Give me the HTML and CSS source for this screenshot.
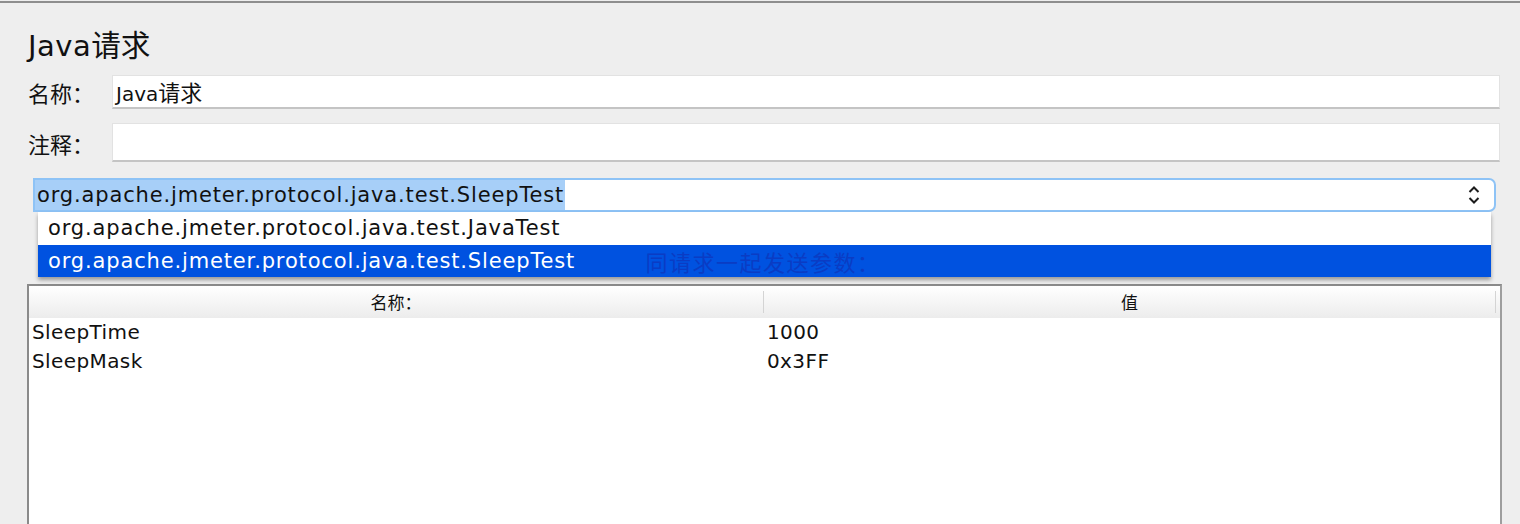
FILE: index.html
```html
<!DOCTYPE html>
<html lang="zh">
  <head>
    <meta charset="UTF-8" />
    <meta name="viewport" content="width=device-width, initial-scale=1.0" />
    <title>Java请求</title>
    <link rel="stylesheet" href="styles.css">
  </head>
  <body>
    <div class="panel">
      <h1 class="panel-title">Java<span class="cjk">请求</span></h1>

      <div class="field-row">
        <label class="field-label">名称：</label>
        <div class="text-field">Java<span class="cjk">请求</span></div>
      </div>
      <div class="field-row field-row-tall">
        <label class="field-label">注释：</label>
        <div class="text-field"></div>
      </div>

      <div class="combo-wrap">
        <div class="combo">
          <span class="combo-value">org.apache.jmeter.protocol.java.test.SleepTest</span>
          <svg class="combo-arrows" width="16" height="22" viewBox="0 0 16 22">
            <polyline points="3.5,8 8,3.5 12.5,8" />
            <polyline points="3.5,14 8,18.5 12.5,14" />
          </svg>
        </div>
        <ul class="combo-popup">
          <li class="combo-item">org.apache.jmeter.protocol.java.test.JavaTest</li>
          <li class="combo-item selected">org.apache.jmeter.protocol.java.test.SleepTest</li>
        </ul>
      </div>

      <div class="params-title">同请求一起发送参数：</div>

      <div class="params-table">
        <div class="table-head">
          <div class="head-cell">名称：</div>
          <div class="head-cell">值</div>
        </div>
        <div class="table-row">
          <div class="cell">SleepTime</div>
          <div class="cell">1000</div>
        </div>
        <div class="table-row">
          <div class="cell">SleepMask</div>
          <div class="cell">0x3FF</div>
        </div>
      </div>
    </div>
  </body>
</html>
```

FILE: styles.css
```css
body {
  margin: 0;
  padding-top: 1px;
  background-color: #eeeeee;
  font-family: "DejaVu Sans", "Noto Sans CJK SC", sans-serif;
  color: #111;
  overflow: hidden;
}

.cjk {
  font-family: "Noto Sans CJK SC", sans-serif;
  font-size: 1.1em;
}

.panel {
  border-top: 2px solid #8e8e8e;
  padding: 22px 20px 0 28px;
  height: 600px;
}

.panel-title {
  margin: 0;
  font-size: 29px;
  font-weight: normal;
  line-height: 38px;
  height: 38px;
  letter-spacing: 0.5px;
}

.panel-title .cjk {
  font-size: 1.02em;
  letter-spacing: 0;
}

.field-row {
  display: flex;
  align-items: center;
  margin-top: 12px;
}

.field-row-tall {
  margin-top: 14px;
}

.field-row-tall .text-field {
  height: 39px;
}

.field-label {
  width: 84px;
  font-family: "Noto Sans CJK SC", sans-serif;
  font-size: 22px;
}

.text-field {
  flex: 1;
  height: 34px;
  box-sizing: border-box;
  background-color: #fff;
  border: 1px solid #e2e2e2;
  border-bottom: 2px solid #c4c4c4;
  padding-left: 3px;
  font-size: 20px;
  line-height: 31px;
}

.combo-wrap {
  position: relative;
  margin: 16px 4px 0 5px;
}

.combo {
  display: flex;
  align-items: center;
  justify-content: space-between;
  height: 34px;
  box-sizing: border-box;
  background-color: #fff;
  border: 2px solid #8ec3f6;
  border-radius: 0 7px 7px 0;
  padding: 0 12px 0 0;
}

.combo-value {
  background-color: #a7cff8;
  font-size: 21px;
  line-height: 30px;
  letter-spacing: 0.85px;
  padding: 0 1px 0 2px;
}

.combo-arrows polyline {
  fill: none;
  stroke: #1c1c1c;
  stroke-width: 2;
}

.combo-popup {
  position: absolute;
  top: 34px;
  left: 5px;
  right: 5px;
  margin: 0;
  padding: 0;
  list-style: none;
  background-color: #fff;
  box-shadow: 0 3px 4px rgba(0, 0, 0, 0.35);
  z-index: 1;
}

.combo-item {
  height: 33px;
  padding-left: 10px;
  font-size: 21px;
  line-height: 33px;
  letter-spacing: 0.85px;
}

.combo-item.selected {
  height: 32px;
  line-height: 32px;
  background-color: #0052e0;
  color: #fff;
}

.params-title {
  position: relative;
  z-index: 2;
  margin-top: 36px;
  text-align: center;
  font-family: "Noto Sans CJK SC", sans-serif;
  font-size: 22px;
  line-height: 26px;
  letter-spacing: 1.5px;
  color: #0a3cc4;
  padding-right: 2px;
}

.params-table {
  margin: 10px -2px 0 -1px;
  background-color: #fff;
  border-top: 2px solid #8a8a8a;
  border-left: 2px solid #8a8a8a;
  border-right: 2px solid #9e9e9e;
  height: 300px;
}

.table-head {
  display: grid;
  grid-template-columns: 735px 1fr;
  height: 32px;
  background: linear-gradient(#ffffff, #ececec);
  padding-right: 4px;
}

.head-cell {
  text-align: center;
  font-family: "Noto Sans CJK SC", sans-serif;
  font-size: 17px;
  border-right: 1px solid #d4d4d4;
  margin-top: 5px;
  line-height: 21px;
  height: 22px;
}

.table-row {
  display: grid;
  grid-template-columns: 735px 1fr;
  height: 29px;
}

.cell {
  font-size: 20px;
  line-height: 29px;
  letter-spacing: 0.4px;
  padding-left: 3px;
}
```
